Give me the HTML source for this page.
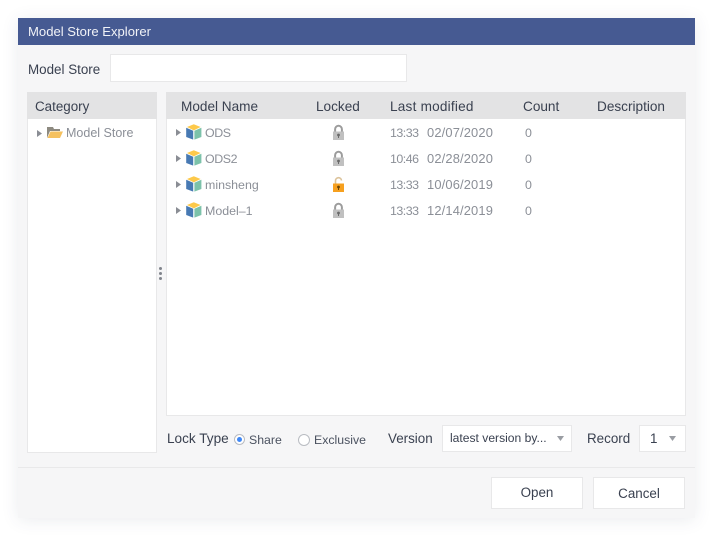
<!DOCTYPE html>
<html><head><meta charset="utf-8">
<style>
html,body{margin:0;padding:0;background:#fff}
body{width:712px;height:536px;position:relative;overflow:hidden;font-family:"Liberation Sans",sans-serif;font-size:13.4px;color:#3a4150}
#w{position:absolute;left:0;top:0;width:712px;height:536px;filter:blur(.3px)}
.a{position:absolute}
.t{position:absolute;white-space:nowrap;line-height:16px}
.g{color:#8b8f97;font-size:12.4px}
.d{font-size:12.9px;letter-spacing:.15px}
.h{font-size:12.4px;letter-spacing:-.5px}
.c{font-size:13.6px}
.box{position:absolute;background:#fff;border:1px solid #e8e8e9;box-sizing:border-box}
.hd{position:absolute;background:#e3e3e4}
svg{position:absolute;overflow:visible}
</style></head><body>
<svg width="0" height="0" style="position:absolute"><defs>
<g id="cube"><path d="M1 3 L7.8 0.2 L14.6 3 L7.8 6.4Z" fill="#fdc94a"/><path d="M0.2 3.8 L7.2 6.8 V15.6 L0.2 13Z" fill="#4779b3"/><path d="M8.4 6.8 L15.4 3.8 V13 L8.4 15.6Z" fill="#7cc2aa"/></g>
<g id="lock"><path d="M2.6 7 V4.2 a3.4 3.4 0 0 1 6.8 0 V7" transform="translate(.5 0)" fill="none" stroke="#9c9c9c" stroke-width="2"/><rect x="1" y="6.5" width="11" height="8.5" fill="#c0c0c0"/><circle cx="6.5" cy="10" r="1.4" fill="#6a6a6a"/><rect x="6" y="10" width="1" height="3" fill="#6a6a6a"/></g>
<g id="unlock"><path d="M3.5 7 V3.8 a3 3 0 0 1 6 -0.3" fill="none" stroke="#dcc39b" stroke-width="1.6"/><rect x="1" y="6.5" width="11" height="8.5" fill="#f6a01f"/><circle cx="6.5" cy="10" r="1.4" fill="#6b4508"/><rect x="6" y="10" width="1" height="3" fill="#6b4508"/></g>
</defs></svg>
<div id="w">
<div class="a" style="left:18px;top:18px;width:677px;height:500px;background:#f6f6f7;box-shadow:0 2px 16px rgba(60,70,100,.10)"></div>
<div class="a" style="left:18px;top:18px;width:677px;height:27px;background:#465a92"></div>
<div class="t" style="left:28px;top:24px;color:#f0f2f7;font-size:13.1px">Model Store Explorer</div>

<div class="t" style="left:28px;top:62px">Model Store</div>
<div class="box" style="left:110px;top:54px;width:297px;height:28px"></div>

<div class="box" style="left:27px;top:92px;width:130px;height:361px"></div>
<div class="hd" style="left:27px;top:92px;width:130px;height:27px"></div>
<div class="t" style="left:35px;top:99px">Category</div>
<svg style="left:37px;top:130px" width="6" height="7"><path d="M0 0 L5 3.5 L0 7Z" fill="#8a8d94"/></svg>
<svg style="left:47px;top:127px" width="16" height="12"><path d="M0 0 H6 L7 2 H13 V4 H3 L0 11Z" fill="#8d8a80"/><path d="M3.5 4.5 H16 L13 11 H0.5Z" fill="#f5c15f"/></svg>
<div class="t g" style="left:66px;top:125px;font-size:12.5px">Model Store</div>

<div class="a" style="left:159px;top:267px;width:3px;height:3px;background:#80848c;border-radius:50%"></div>
<div class="a" style="left:159px;top:272px;width:3px;height:3px;background:#80848c;border-radius:50%"></div>
<div class="a" style="left:159px;top:277px;width:3px;height:3px;background:#80848c;border-radius:50%"></div>

<div class="box" style="left:166px;top:92px;width:520px;height:324px"></div>
<div class="hd" style="left:166px;top:92px;width:520px;height:27px"></div>
<div class="t c" style="left:181px;top:99px">Model Name</div>
<div class="t c" style="left:316px;top:99px">Locked</div>
<div class="t c" style="left:390px;top:99px;letter-spacing:.22px">Last modified</div>
<div class="t c" style="left:523px;top:99px">Count</div>
<div class="t c" style="left:597px;top:99px">Description</div>

<svg style="left:176px;top:129px" width="6" height="7"><path d="M0 0 L5 3.5 L0 7Z" fill="#8a8d94"/></svg>
<svg style="left:186px;top:124px" width="16" height="16"><use href="#cube"/></svg>
<div class="t g" style="left:205px;top:125px;letter-spacing:-.4px">ODS</div>
<svg style="left:332px;top:125px" width="13" height="16"><use href="#lock"/></svg>
<div class="t g h" style="left:390px;top:125px">13:33</div><div class="t g d" style="left:427px;top:125px">02/07/2020</div><div class="t g" style="left:525px;top:125px">0</div>

<svg style="left:176px;top:155px" width="6" height="7"><path d="M0 0 L5 3.5 L0 7Z" fill="#8a8d94"/></svg>
<svg style="left:186px;top:150px" width="16" height="16"><use href="#cube"/></svg>
<div class="t g" style="left:205px;top:151px;letter-spacing:-.4px">ODS2</div>
<svg style="left:332px;top:151px" width="13" height="16"><use href="#lock"/></svg>
<div class="t g h" style="left:390px;top:151px">10:46</div><div class="t g d" style="left:427px;top:151px">02/28/2020</div><div class="t g" style="left:525px;top:151px">0</div>

<svg style="left:176px;top:181px" width="6" height="7"><path d="M0 0 L5 3.5 L0 7Z" fill="#8a8d94"/></svg>
<svg style="left:186px;top:176px" width="16" height="16"><use href="#cube"/></svg>
<div class="t g" style="left:205px;top:177px">minsheng</div>
<svg style="left:332px;top:177px" width="13" height="16"><use href="#unlock"/></svg>
<div class="t g h" style="left:390px;top:177px">13:33</div><div class="t g d" style="left:427px;top:177px">10/06/2019</div><div class="t g" style="left:525px;top:177px">0</div>

<svg style="left:176px;top:207px" width="6" height="7"><path d="M0 0 L5 3.5 L0 7Z" fill="#8a8d94"/></svg>
<svg style="left:186px;top:202px" width="16" height="16"><use href="#cube"/></svg>
<div class="t g" style="left:205px;top:203px">Model–1</div>
<svg style="left:332px;top:203px" width="13" height="16"><use href="#lock"/></svg>
<div class="t g h" style="left:390px;top:203px">13:33</div><div class="t g d" style="left:427px;top:203px">12/14/2019</div><div class="t g" style="left:525px;top:203px">0</div>

<div class="t" style="left:167px;top:431px;font-size:13.6px">Lock Type</div>
<div class="a" style="left:234px;top:434px;width:11px;height:11px;box-sizing:border-box;border:1px solid #b9bcc2;border-radius:50%;background:#fff"></div>
<div class="a" style="left:237px;top:437px;width:5px;height:5px;background:#3f87f5;border-radius:50%"></div>
<div class="t" style="left:249px;top:432px;font-size:12.3px;color:#4b5260">Share</div>
<div class="a" style="left:298px;top:434px;width:12px;height:12px;box-sizing:border-box;border:1px solid #b9bcc2;border-radius:50%;background:#fff"></div>
<div class="t" style="left:314px;top:432px;font-size:12.3px;color:#4b5260">Exclusive</div>
<div class="t" style="left:388px;top:431px">Version</div>
<div class="box" style="left:442px;top:425px;width:130px;height:27px"></div>
<div class="t" style="left:450px;top:430px;font-size:12.1px">latest version by...</div>
<svg style="left:557px;top:436px" width="8" height="5"><path d="M0 0 H7 L3.5 5Z" fill="#9a9da3"/></svg>
<div class="t" style="left:587px;top:431px">Record</div>
<div class="box" style="left:639px;top:425px;width:47px;height:27px"></div>
<div class="t" style="left:650px;top:431px">1</div>
<svg style="left:669px;top:436px" width="8" height="5"><path d="M0 0 H7 L3.5 5Z" fill="#9a9da3"/></svg>

<div class="a" style="left:18px;top:467px;width:677px;height:1px;background:#e9e9ea"></div>
<div class="box" style="left:491px;top:477px;width:92px;height:32px"></div>
<div class="t" style="left:491px;top:485px;width:92px;text-align:center">Open</div>
<div class="box" style="left:593px;top:477px;width:92px;height:32px"></div>
<div class="t" style="left:593px;top:486px;width:92px;text-align:center">Cancel</div>
</div>
</body></html>
